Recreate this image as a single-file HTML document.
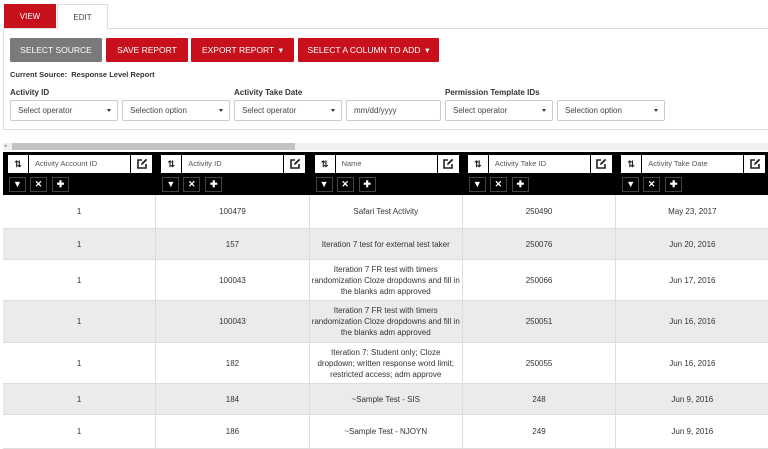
<!DOCTYPE html>
<html><head><style>
*{box-sizing:border-box;margin:0;padding:0}
body{width:768px;height:432px;overflow:hidden;background:#fff;font-family:"Liberation Sans",sans-serif;position:relative;color:#333}
.a{position:absolute}
.btn{position:absolute;top:38px;height:24px;color:#fff;font-size:8.5px;display:flex;align-items:center;justify-content:center;background:#c8101c;border-radius:1px}
.lbl{position:absolute;top:88px;font-size:8px;font-weight:bold;color:#333}
.sel{position:absolute;top:100px;height:21px;border:1px solid #ccc;border-radius:2px;font-size:8px;color:#444;padding-left:7px;line-height:19px;background:#fff}
.sel .car{position:absolute;right:6px;top:8px;border-left:2.5px solid transparent;border-right:2.5px solid transparent;border-top:3px solid #333}
.hc{position:absolute;top:155px;height:18px;background:#fff;font-size:7.5px;color:#555}
.ib{position:absolute;top:177px;width:17px;height:15px;border:1px solid #444;color:#fff;font-size:9px;text-align:center;line-height:13px;font-weight:bold}
.row{position:absolute;left:3px;width:765px}
.cell{position:absolute;top:0;height:100%;display:flex;align-items:center;justify-content:center;text-align:center;font-size:8px;color:#333;line-height:11px;border-right:1px solid #ddd}
</style></head><body>
<div class="a" style="left:4px;top:4px;width:52px;height:25px;background:#c8101c;color:#fff;font-size:8px;display:flex;align-items:center;justify-content:center">VIEW</div>
<div class="a" style="left:57px;top:4px;width:51px;height:25px;border:1px solid #ddd;border-bottom:none;background:#fff;font-size:8px;display:flex;align-items:center;justify-content:center;color:#444;z-index:2">EDIT</div>
<div class="a" style="left:3px;top:28px;width:780px;height:102px;border:1px solid #ddd"></div>
<div class="btn" style="left:10px;width:92px;background:#7a7a7a">SELECT SOURCE</div>
<div class="btn" style="left:106px;width:82px">SAVE REPORT</div>
<div class="btn" style="left:191px;width:103px">EXPORT REPORT &nbsp;▾</div>
<div class="btn" style="left:298px;width:141px">SELECT A COLUMN TO ADD &nbsp;▾</div>
<div class="a" style="left:10px;top:70px;font-size:7.5px;font-weight:bold">Current Source:&nbsp; Response Level Report</div>
<div class="lbl" style="left:10px">Activity ID</div>
<div class="lbl" style="left:234px">Activity Take Date</div>
<div class="lbl" style="left:445px">Permission Template IDs</div>
<div class="sel" style="left:10px;width:108px">Select operator<span class="car"></span></div>
<div class="sel" style="left:122px;width:108px">Selection option<span class="car"></span></div>
<div class="sel" style="left:234px;width:108px">Select operator<span class="car"></span></div>
<div class="sel" style="left:346px;width:95px">mm/dd/yyyy</div>
<div class="sel" style="left:445px;width:108px">Select operator<span class="car"></span></div>
<div class="sel" style="left:557px;width:108px">Selection option<span class="car"></span></div>
<div class="a" style="left:3px;top:143px;width:765px;height:7px;background:#f0f0f0"></div>
<div class="a" style="left:4px;top:143px;font-size:5px;color:#888">◂</div>
<div class="a" style="left:12px;top:143px;width:283px;height:7px;background:#c2c2c2"></div>
<div class="a" style="left:3px;top:152px;width:765px;height:43px;background:#000"></div>
<div id="hd"></div>
<div id="rows"></div>
<script>
var names=["Activity Account ID","Activity ID","Name","Activity Take ID","Activity Take Date"];
var ed='<svg width="12" height="12" viewBox="0 0 12 12" style="margin-top:3px"><path d="M6 2H2v8h8V6" fill="none" stroke="#222" stroke-width="1.6"/><path d="M5 7l0.5-2L10 0.8 11.2 2 6.8 6.5z" fill="#222"/></svg>';
var h="";
for(var i=0;i<5;i++){var x=8+i*153.3;
h+='<div class="hc" style="left:'+x+'px;width:20px;text-align:center;line-height:18px;font-weight:bold;color:#222;font-size:9px">⇅</div>';
h+='<div class="hc" style="left:'+(x+21)+'px;width:101px;padding-left:6px;line-height:18px">'+names[i]+'</div>';
h+='<div class="hc" style="left:'+(x+123)+'px;width:21px;text-align:center">'+ed+'</div>';
h+='<div class="ib" style="left:'+(x+1)+'px">▼</div><div class="ib" style="left:'+(x+22)+'px">✕</div><div class="ib" style="left:'+(x+44)+'px">✚</div>';}
document.getElementById("hd").innerHTML=h;
var R=[[195,34,"#fff",["1","100479","Safari Test Activity","250490","May 23, 2017"]],
[229,31,"#ebebeb",["1","157","Iteration 7 test for external test taker","250076","Jun 20, 2016"]],
[260,41,"#fff",["1","100043","Iteration 7 FR test with timers randomization Cloze dropdowns and fill in the blanks adm approved","250066","Jun 17, 2016"]],
[301,42,"#ebebeb",["1","100043","Iteration 7 FR test with timers randomization Cloze dropdowns and fill in the blanks adm approved","250051","Jun 16, 2016"]],
[343,41,"#fff",["1","182","Iteration 7: Student only; Cloze dropdown; written response word limit; restricted access; adm approve","250055","Jun 16, 2016"]],
[384,31,"#ebebeb",["1","184","~Sample Test - SIS","248","Jun 9, 2016"]],
[415,34,"#fff",["1","186","~Sample Test - NJOYN","249","Jun 9, 2016"]]];
var s="";
R.forEach(function(r){s+='<div class="row" style="top:'+r[0]+'px;height:'+r[1]+'px;background:'+r[2]+';border-bottom:1px solid #ddd">';
for(var i=0;i<5;i++){s+='<div class="cell" style="left:'+(i*153.3)+'px;width:153.3px;padding:0 2px">'+r[3][i]+'</div>';}
s+='</div>';});
document.getElementById("rows").innerHTML=s;
</script>
</body></html>
